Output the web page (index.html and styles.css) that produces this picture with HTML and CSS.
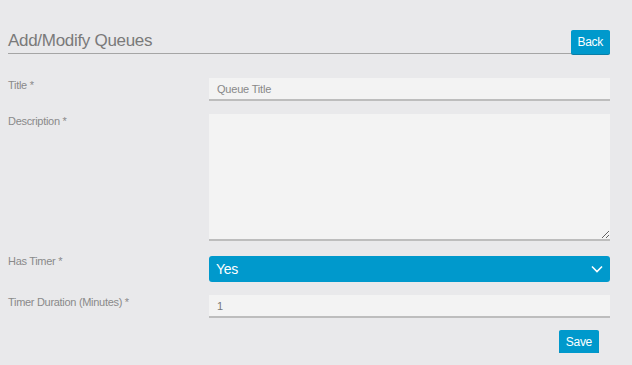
FILE: index.html
```html
<!DOCTYPE html>
<html lang="en">
<head>
<meta charset="UTF-8" />
<title>Add/Modify Queues</title>
<link rel="stylesheet" href="styles.css">
</head>
<body>

<div class="page">
    <div class="page-header">
        <h1>Add/Modify Queues</h1>
        <button type="button" class="btn">Back</button>
    </div>

    <form class="queue-form" onsubmit="event.preventDefault();">
        <label class="form-label" for="q-title">Title *</label>
        <input type="text" id="q-title" class="field" placeholder="Queue Title">

        <label class="form-label" for="q-desc">Description *</label>
        <textarea id="q-desc" class="field field-area"></textarea>

        <label class="form-label" for="q-timer">Has Timer *</label>
        <div class="select-wrap">
            <select id="q-timer" class="field-select">
                <option selected>Yes</option>
                <option>No</option>
            </select>
            <svg class="chevron" width="12" height="8" viewBox="0 0 12 8">
                <path d="M1 1.5 L6 6.5 L11 1.5" fill="none" stroke="#fff" stroke-width="1.6"/>
            </svg>
        </div>

        <label class="form-label" for="q-duration">Timer Duration (Minutes) *</label>
        <input type="text" id="q-duration" class="field" value="1">

        <div class="form-actions">
            <button type="submit" class="btn">Save</button>
        </div>
    </form>
</div>

</body>
</html>
```

FILE: styles.css
```css
body {
    margin: 0;
    background: #e9e9eb;
    font-family: "Liberation Sans", Arial, sans-serif;
    color: #888;
}
.page {
    padding: 30px 22px 0 8px;
}
.page-header {
    display: flex;
    align-items: flex-end;
}
.page-header h1 {
    flex: 1;
    margin: 0;
    font-size: 17px;
    letter-spacing: -0.3px;
    font-weight: normal;
    color: #7a7a7a;
    line-height: 22px;
    border-bottom: 1px solid #a5a5a5;
    padding-bottom: 1px;
}
.btn {
    background: #0099cc;
    color: #fff;
    border: none;
    border-radius: 2px;
    box-shadow: 0 1px 0 #0a7ea6;
    font-family: inherit;
    font-size: 12px;
    letter-spacing: -0.3px;
    height: 23px;
    padding: 0 7px;
    cursor: pointer;
}
.page-header .btn {
    height: 24px;
}
.queue-form {
    display: grid;
    grid-template-columns: 201px 1fr;
    row-gap: 13px;
    margin-top: 24px;
}
.form-label {
    font-size: 11px;
    letter-spacing: -0.3px;
    line-height: 12px;
    padding-top: 1px;
    color: #8a8a8a;
}
.field {
    display: block;
    box-sizing: border-box;
    width: 100%;
    height: 23px;
    margin: 0;
    padding: 0 8px;
    background: #f3f3f3;
    border: none;
    border-bottom: 2px solid #bdbdbd;
    outline: none;
    font-family: inherit;
    font-size: 11px;
    letter-spacing: -0.2px;
    color: #777;
}
.field::placeholder {
    color: #888;
}
.field-area {
    height: 127px;
    resize: vertical;
}
.select-wrap {
    position: relative;
    margin-top: 2px;
}
.field-select {
    display: block;
    width: 100%;
    height: 26px;
    margin: 0;
    padding: 0 7px;
    background: #0099cc;
    color: #fff;
    border: none;
    border-radius: 3px;
    appearance: none;
    -webkit-appearance: none;
    font-family: inherit;
    font-size: 14px;
    letter-spacing: -0.3px;
    outline: none;
}
.chevron {
    position: absolute;
    right: 7px;
    top: 9px;
}
.form-actions {
    grid-column: 2;
    display: flex;
    justify-content: flex-end;
    padding-right: 11px;
    margin-top: -1px;
}
```
